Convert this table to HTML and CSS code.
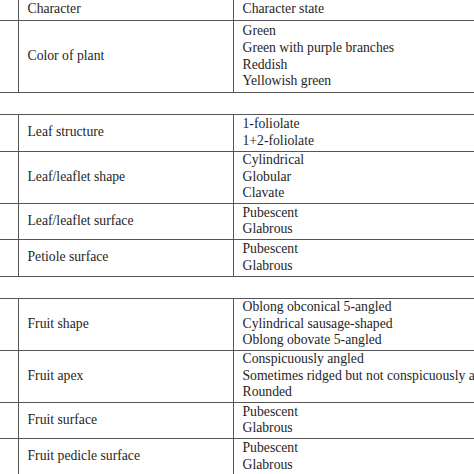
FILE: index.html
```html
<!DOCTYPE html>
<html lang="en">
<head>
<meta charset="utf-8">
<title>Characters and character states</title>
<link rel="stylesheet" href="styles.css">
</head>
<body>
<div class="viewport">
<table class="traits">
  <colgroup>
    <col class="c-group">
    <col class="c-char">
    <col class="c-state">
  </colgroup>
  <thead>
    <tr class="r-head">
      <th class="cat"></th>
      <th class="char">Character</th>
      <th class="state">Character state</th>
    </tr>
  </thead>
  <tbody>
    <tr class="r4">
      <td class="cat"></td>
      <td class="char">Color of plant</td>
      <td class="state">Green<br>Green with purple branches<br>Reddish<br>Yellowish green</td>
    </tr>
    <tr class="r-gap">
      <td class="cat"></td><td></td><td></td>
    </tr>
    <tr class="r2">
      <td class="cat"></td>
      <td class="char">Leaf structure</td>
      <td class="state">1-foliolate<br>1+2-foliolate</td>
    </tr>
    <tr class="r3">
      <td class="cat"></td>
      <td class="char">Leaf/leaflet shape</td>
      <td class="state">Cylindrical<br>Globular<br>Clavate</td>
    </tr>
    <tr class="r2">
      <td class="cat"></td>
      <td class="char">Leaf/leaflet surface</td>
      <td class="state">Pubescent<br>Glabrous</td>
    </tr>
    <tr class="r2">
      <td class="cat"></td>
      <td class="char">Petiole surface</td>
      <td class="state">Pubescent<br>Glabrous</td>
    </tr>
    <tr class="r-gap">
      <td class="cat"></td><td></td><td></td>
    </tr>
    <tr class="r3">
      <td class="cat"></td>
      <td class="char">Fruit shape</td>
      <td class="state">Oblong obconical 5-angled<br>Cylindrical sausage-shaped<br>Oblong obovate 5-angled</td>
    </tr>
    <tr class="r3">
      <td class="cat"></td>
      <td class="char">Fruit apex</td>
      <td class="state">Conspicuously angled<br>Sometimes ridged but not conspicuously angled<br>Rounded</td>
    </tr>
    <tr class="r2">
      <td class="cat"></td>
      <td class="char">Fruit surface</td>
      <td class="state">Pubescent<br>Glabrous</td>
    </tr>
    <tr class="r2">
      <td class="cat"></td>
      <td class="char">Fruit pedicle surface</td>
      <td class="state">Pubescent<br>Glabrous</td>
    </tr>
  </tbody>
</table>
</div>
</body>
</html>
```

FILE: styles.css
```css
html, body {
  margin: 0;
  padding: 0;
  background: #ffffff;
}

.viewport {
  width: 474px;
  height: 474px;
  overflow: hidden;
}

.traits {
  table-layout: fixed;
  border-collapse: collapse;
  width: 553px;
  margin-top: -3px;
  font-family: "Liberation Serif", "Times New Roman", serif;
  font-size: 13.7px;
  line-height: 16.67px;
  color: #1e1e1e;
}

.c-group { width: 18px; }
.c-char { width: 215px; }
.c-state { width: 320px; }

.traits th,
.traits td {
  border: 1px solid #555555;
  padding: 0 0 0 9px;
  vertical-align: middle;
  text-align: left;
  font-weight: normal;
  white-space: nowrap;
  overflow: hidden;
}

.traits .cat {
  border-left: none;
  padding: 0;
}

.r-head { height: 23px; }
.r-gap { height: 22px; }
.r2 { height: 36.5px; }
.r3 { height: 52px; }
.r4 { height: 72px; }

.r-gap td {
  border-left: none;
  border-right: none;
}
```
